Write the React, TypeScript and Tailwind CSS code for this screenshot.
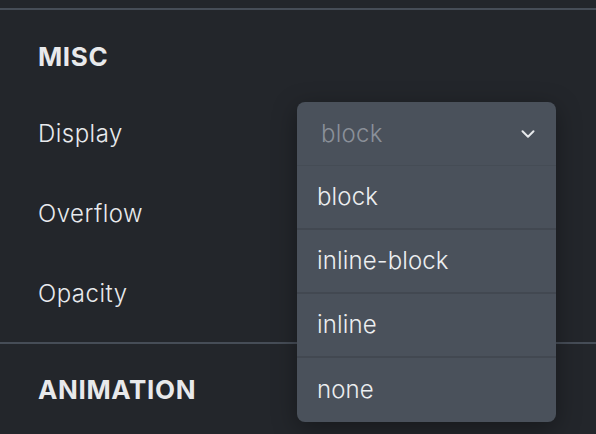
import { ChevronDown } from 'lucide-react';

const options = ['block', 'inline-block', 'inline', 'none'];

function SectionHeading({ children }: { children: string }) {
  return (
    <h2 className="h-8 text-[26px] font-bold leading-8 tracking-[0.025em] text-[#e8e9eb]">
      {children}
    </h2>
  );
}

function DisplaySelect() {
  return (
    <div className="relative mr-[2px] h-16 w-[259px]">
      <div className="absolute left-0 top-px z-10 w-full overflow-hidden rounded-lg bg-[#4a515b] shadow-[0_6px_24px_rgba(0,0,0,0.35)]">
        <div className="flex h-16 items-center justify-between border-b border-[#454c55] pl-[24px] pr-[17px]">
          <span className="text-[24px] font-light tracking-[0.01em] text-[#8a9099]">block</span>
          <ChevronDown size={22} strokeWidth={2.2} className="text-[#e6e8eb]" />
        </div>
        {options.map((option, index) => (
          <div
            key={option}
            className={
              index < options.length - 1
                ? 'flex h-16 items-center border-b-2 border-[#424851] pl-[20px] text-[24px] font-light tracking-[0.005em] text-[#eceef0]'
                : 'flex h-16 items-center pl-[20px] text-[24px] font-light tracking-[0.005em] text-[#eceef0]'
            }
          >
            {option}
          </div>
        ))}
      </div>
    </div>
  );
}

function Row({ label, children }: { label: string; children?: React.ReactNode }) {
  return (
    <div className="flex h-20 items-center justify-between">
      <span className="pt-px text-[24px] font-light tracking-[0.02em] text-[#e8eaed]">{label}</span>
      {children}
    </div>
  );
}

export default function App() {
  return (
    <div
      className="h-[434px] w-[596px] overflow-hidden bg-[#23262b] pt-2"
      style={{ fontFamily: 'Inter, "Noto Sans", sans-serif' }}
    >
      <section className="border-t-2 border-[#464d57] px-[38px] pb-[9px] pt-[31px]">
        <SectionHeading>MISC</SectionHeading>
        <div className="mt-5">
          <Row label="Display">
            <DisplaySelect />
          </Row>
          <Row label="Overflow" />
          <Row label="Opacity" />
        </div>
      </section>
      <section className="border-t-2 border-[#464d57] px-[38px] pt-[30px]">
        <SectionHeading>ANIMATION</SectionHeading>
      </section>
    </div>
  );
}
